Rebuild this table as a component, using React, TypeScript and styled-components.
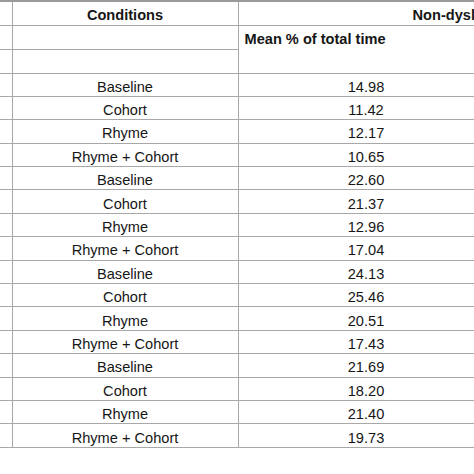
import styled, { createGlobalStyle } from "styled-components";

const GlobalStyle = createGlobalStyle`
  html, body {
    margin: 0;
    padding: 0;
    background: #fff;
    overflow: hidden;
  }
`;

interface Row {
  condition: string;
  mean: string;
}

const rows: Row[] = [
  { condition: "Baseline", mean: "14.98" },
  { condition: "Cohort", mean: "11.42" },
  { condition: "Rhyme", mean: "12.17" },
  { condition: "Rhyme + Cohort", mean: "10.65" },
  { condition: "Baseline", mean: "22.60" },
  { condition: "Cohort", mean: "21.37" },
  { condition: "Rhyme", mean: "12.96" },
  { condition: "Rhyme + Cohort", mean: "17.04" },
  { condition: "Baseline", mean: "24.13" },
  { condition: "Cohort", mean: "25.46" },
  { condition: "Rhyme", mean: "20.51" },
  { condition: "Rhyme + Cohort", mean: "17.43" },
  { condition: "Baseline", mean: "21.69" },
  { condition: "Cohort", mean: "18.20" },
  { condition: "Rhyme", mean: "21.40" },
  { condition: "Rhyme + Cohort", mean: "19.73" },
];

export default function App() {
  return (
    <>
      <GlobalStyle />
      <Table>
        <colgroup>
          <col style={{ width: 12 }} />
          <col style={{ width: 226 }} />
          <col style={{ width: 256 }} />
          <col style={{ width: 184 }} />
        </colgroup>
        <tbody>
          <HeadRow>
            <Cell />
            <HeadCell>Conditions</HeadCell>
            <HeadCell colSpan={2}>Non-dyslexic</HeadCell>
          </HeadRow>
          <SubRow>
            <Cell />
            <Cell />
            <SubHeadCell rowSpan={2}>Mean % of total time</SubHeadCell>
            <Cell rowSpan={2} />
          </SubRow>
          <SubRow>
            <Cell />
            <Cell />
          </SubRow>
          {rows.map((row, index) => (
            <DataRow key={index}>
              <Cell />
              <DataCell>{row.condition}</DataCell>
              <DataCell>{row.mean}</DataCell>
              <Cell />
            </DataRow>
          ))}
        </tbody>
      </Table>
    </>
  );
}

const Table = styled.table`
  width: 678px;
  table-layout: fixed;
  border-collapse: collapse;
  border-top: 2px solid #9a9a9a;
  border-bottom: 1px solid #a8a8a8;
  font-family: "Liberation Sans", Arial, sans-serif;
  font-size: 14.6px;
  color: #161616;
`;

const HeadRow = styled.tr`
  height: 24px;
`;

const SubRow = styled.tr`
  height: 24px;
`;

const DataRow = styled.tr`
  height: 23.4px;
`;

const Cell = styled.td`
  padding: 0 4px;
  text-align: center;
  vertical-align: middle;
  border-left: 1px solid #a8a8a8;
  border-right: 1px solid #a8a8a8;
  border-bottom: 1px solid #a8a8a8;
  white-space: nowrap;
  line-height: 17px;
  &:first-child {
    border-left: none;
  }
`;

const DataCell = styled(Cell)`
  padding-top: 4px;
  padding-bottom: 0;
  line-height: 18px;
`;

const HeadCell = styled(Cell)`
  font-weight: bold;
  padding-top: 4px;
`;

const SubHeadCell = styled(Cell)`
  font-weight: bold;
  text-align: left;
  vertical-align: top;
  padding: 5px 6px 0;
`;
